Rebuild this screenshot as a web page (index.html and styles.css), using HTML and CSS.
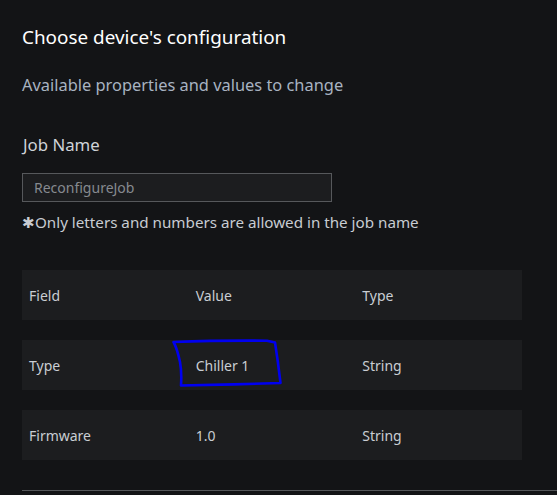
FILE: index.html
```html
<!DOCTYPE html>
<html>
<head>
<meta charset="utf-8">
<link rel="stylesheet" href="styles.css">
</head>
<body>
<div class="panel">
  <h1 class="title">Choose device's configuration</h1>
  <p class="subtitle">Available properties and values to change</p>
  <label class="label">Job Name</label>
  <div class="input"><span class="placeholder">ReconfigureJob</span></div>
  <p class="note"><span class="star">✱</span>Only letters and numbers are allowed in the job name</p>
  <div class="table">
    <div class="row"><div class="cell">Field</div><div class="cell">Value</div><div class="cell">Type</div></div>
    <div class="row"><div class="cell">Type</div><div class="cell">Chiller 1</div><div class="cell">String</div></div>
    <div class="row"><div class="cell">Firmware</div><div class="cell">1.0</div><div class="cell">String</div></div>
  </div>
  <div class="divider"></div>
</div>
<svg class="mark" width="557" height="495" viewBox="0 0 557 495">
  <path d="M173.5 342 C 200 341, 240 340.5, 267 340.7 L 275 342.5 C 277 355, 279 370, 280.5 383 C 250 384, 210 385, 181 385.5 C 181.5 378, 181.5 370, 180 362 C 178.5 355, 177 348, 173.5 342 Z" fill="none" stroke="#0000f0" stroke-width="2.6" stroke-linejoin="round"/>
</svg>
</body>
</html>
```
FILE: styles.css
```css
html, body {
  margin: 0;
  padding: 0;
  background: #131416;
  width: 557px;
  height: 495px;
  overflow: hidden;
}
body {
  font-family: "Noto Sans", "Open Sans", sans-serif;
  position: relative;
}
.panel {
  padding: 24px 0 0 22px;
}
.title {
  margin: 0;
  font-size: 18.9px;
  font-weight: 400;
  line-height: 26px;
  color: #ffffff;
}
.subtitle {
  margin: 24px 0 0 0;
  font-size: 16.4px;
  line-height: 22px;
  color: #a8b3c1;
}
.label {
  display: block;
  margin-top: 38px;
  font-size: 16.8px;
  line-height: 22px;
  color: #cfd3d8;
  padding-left: 1px;
}
.input {
  margin-top: 17px;
  width: 297px;
  height: 27px;
  border: 1px solid #56585b;
  background: #1c1d1f;
  display: flex;
  align-items: center;
  padding-left: 11px;
  box-sizing: content-box;
}
.placeholder {
  font-size: 14px;
  color: #868a8f;
}
.note {
  margin: 9px 0 0 0;
  font-size: 15.2px;
  line-height: 22px;
  color: #c8ccd2;
}
.table {
  margin-top: 37px;
  width: 500px;
  display: flex;
  flex-direction: column;
  gap: 20px;
}
.row {
  display: grid;
  grid-template-columns: 1fr 1fr 1fr;
  height: 50px;
  align-items: center;
  background: #1c1d1f;
}
.cell {
  padding-left: 7px;
  font-size: 14px;
  color: #c9cdd3;
}
.divider {
  margin-top: 30px;
  height: 1px;
  background: #55575a;
}
.mark {
  position: absolute;
  left: 0;
  top: 0;
  pointer-events: none;
}
```
